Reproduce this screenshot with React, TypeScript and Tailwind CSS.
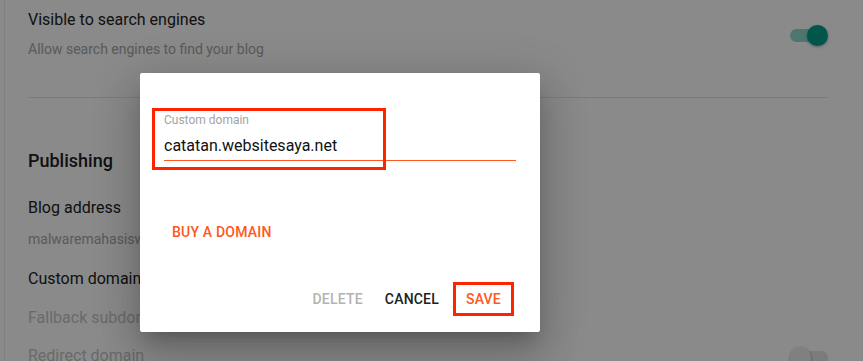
import React from 'react'

function Toggle({ on }: { on: boolean }) {
  return (
    <div className="relative w-[38px] h-[21px] shrink-0">
      <div
        className={
          on
            ? 'absolute left-0 right-[2px] top-[4px] h-[13px] rounded-full bg-[#8fdccb]'
            : 'absolute left-[3px] right-0 top-[4px] h-[13px] rounded-full bg-[#e3e3e3]'
        }
      />
      <div
        className={
          on
            ? 'absolute right-0 top-0 w-[21px] h-[21px] rounded-full bg-[#00a08a] shadow-[0_1px_3px_rgba(0,0,0,0.35)]'
            : 'absolute left-0 top-0 w-[21px] h-[21px] rounded-full bg-[#ececec] shadow-[0_1px_3px_rgba(0,0,0,0.35)]'
        }
      />
    </div>
  )
}

export default function App() {
  return (
    <div
      className="relative w-[863px] h-[361px] overflow-hidden bg-white"
      style={{ fontFamily: 'Roboto, "Liberation Sans", Arial, sans-serif' }}
    >
      {/* Settings page */}
      <div className="h-full ml-[4px] border-l border-[#ececec] pl-[23px] pr-[35px] pt-2">
        <div className="flex items-center justify-between">
          <div>
            <div className="text-base leading-6 text-[#212121]">Visible to search engines</div>
            <div className="mt-[7px] text-sm leading-5 text-[#a6a6a6]">
              Allow search engines to find your blog
            </div>
          </div>
          <div className="mt-[3px]">
            <Toggle on />
          </div>
        </div>

        <div className="mt-[38px] border-t border-[#e4e4e4]" />

        <div className="mt-[51px] text-[18px] leading-6 font-medium text-[#212121]">Publishing</div>

        <div className="mt-[23px] text-base leading-6 text-[#212121]">Blog address</div>
        <div className="mt-[9px] text-sm leading-5 text-[#a6a6a6]">malwaremahasiswa.blogspot.com</div>

        <div className="mt-[18px] text-base leading-6 text-[#212121]">Custom domain</div>

        <div className="mt-[15px] text-base leading-6 text-[#c4c4c4]">Fallback subdomain</div>

        <div className="mt-[14px] flex items-center justify-between">
          <div className="text-base leading-6 text-[#c4c4c4]">Redirect domain</div>
          <div className="mt-[3px]">
            <Toggle on={false} />
          </div>
        </div>
      </div>

      {/* Scrim */}
      <div className="absolute inset-0 bg-[rgba(0,0,0,0.46)]" />

      {/* Dialog */}
      <div className="absolute left-[140px] top-[73px] w-[400px] h-[259px] bg-white rounded-[2px] shadow-[0_11px_15px_-7px_rgba(0,0,0,0.2),0_24px_38px_3px_rgba(0,0,0,0.14),0_9px_46px_8px_rgba(0,0,0,0.12)] px-6 pt-[39px] pb-4 flex flex-col">
        <div className="text-xs leading-4 text-[#a3a3a3]">Custom domain</div>
        <div className="mt-[6px] pb-[2px] border-b border-[#ff5722] text-base leading-6 text-[#111]">
          catatan.websitesaya.net
        </div>

        <div className="mt-[54px] flex">
          <button className="h-[34px] px-2 text-sm font-medium uppercase tracking-[0.2px] text-[#ff5722]">
            Buy a domain
          </button>
        </div>

        <div className="mt-auto mr-[2px] flex items-center justify-end gap-[6px]">
          <button className="h-[34px] min-w-16 px-2 text-sm font-medium uppercase tracking-[0.2px] text-[#b3b3b3]">
            Delete
          </button>
          <button className="h-[34px] min-w-16 px-2 text-sm font-medium uppercase tracking-[0.2px] text-[#212121]">
            Cancel
          </button>
          <button className="h-[34px] w-[61px] border-[3px] border-[#ff2400] text-sm font-medium uppercase tracking-[0.2px] text-[#ff5722]">
            Save
          </button>
        </div>

        {/* annotation box round the field */}
        <div className="absolute left-[12px] top-[35px] w-[234px] h-[62px] border-[3px] border-[#ff2400] pointer-events-none" />
      </div>
    </div>
  )
}
